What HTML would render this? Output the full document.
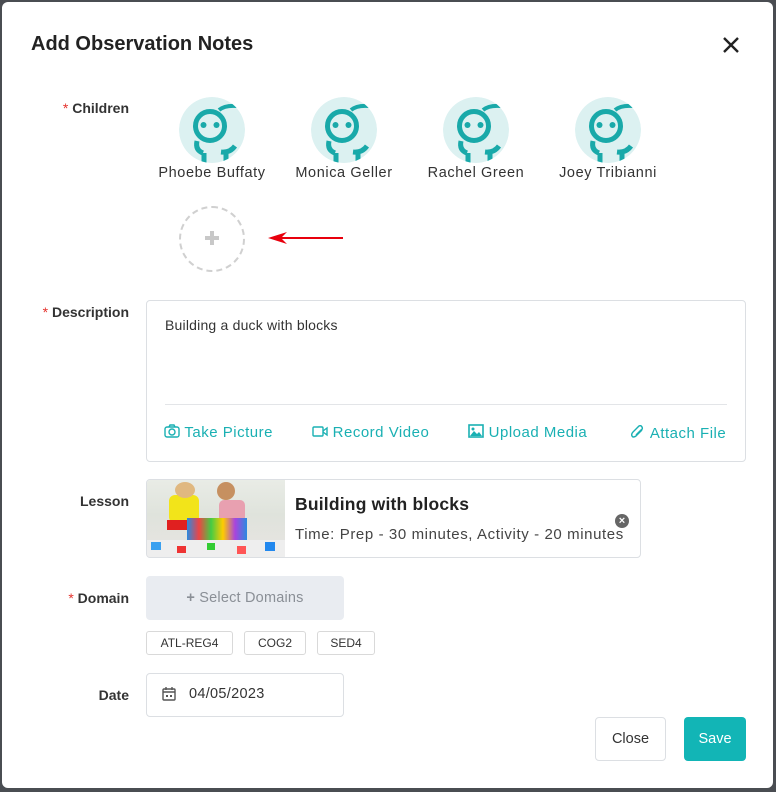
<!DOCTYPE html>
<html><head><style>
*{box-sizing:border-box;margin:0;padding:0}
body{width:776px;height:792px;background:#4a4d52;font-family:"Liberation Sans",sans-serif;position:relative;overflow:hidden}
.m{position:absolute;left:2px;top:2px;width:771px;height:786px;background:#fff;border-radius:6px}
.a{position:absolute}
.lbl{position:absolute;right:647px;font-size:14px;font-weight:bold;color:#333;text-align:right;white-space:nowrap}
.lbl b{color:#e5322d;font-weight:normal}
.nm{position:absolute;width:132px;text-align:center;font-size:14.5px;color:#333;letter-spacing:0.6px;white-space:nowrap}
.box{position:absolute;border:1px solid #dcdfe3;border-radius:4px;background:#fff}
.act{position:absolute;top:424px;font-size:15px;color:#1ab0b3;letter-spacing:0.5px;white-space:nowrap}
.tag{position:absolute;top:631px;height:24px;border:1px solid #d9d9d9;border-radius:3px;font-size:12px;color:#333;line-height:22px;text-align:center}
</style></head><body>
<div class="m"></div>
<div class="a" style="left:31px;top:33px;font-size:20px;font-weight:bold;color:#222">Add Observation Notes</div>
<svg class="a" style="left:722px;top:36px" width="18" height="18"><path d="M2 2L16 16M16 2L2 16" stroke="#222" stroke-width="2.4"/></svg>

<div class="lbl" style="top:100px"><b>* </b>Children</div>
<svg width="0" height="0" style="position:absolute"><defs><g id="f">
<circle cx="33" cy="33" r="33" fill="#dcf1f1"/>
<circle cx="31" cy="29" r="14.5" fill="none" stroke="#19a9a9" stroke-width="5"/>
<path d="M40 13 Q46 8 58 9" fill="none" stroke="#19a9a9" stroke-width="4"/>
<circle cx="24.5" cy="28" r="3" fill="#19a9a9"/><circle cx="37.5" cy="28" r="3" fill="#19a9a9"/>
<path d="M18 44 Q16 53 24 56 M25 56 V66 M42 55 Q51 56 56 49 M47 57 V64" fill="none" stroke="#19a9a9" stroke-width="5"/>
</g></defs></svg>
<svg class="a" style="left:179px;top:97px" width="66" height="66"><clipPath id="c"><circle cx="33" cy="33" r="33"/></clipPath><use href="#f" clip-path="url(#c)"/></svg>
<svg class="a" style="left:311px;top:97px" width="66" height="66"><use href="#f" clip-path="url(#c)"/></svg>
<svg class="a" style="left:443px;top:97px" width="66" height="66"><use href="#f" clip-path="url(#c)"/></svg>
<svg class="a" style="left:575px;top:97px" width="66" height="66"><use href="#f" clip-path="url(#c)"/></svg>
<div class="nm" style="left:146px;top:165px">Phoebe Buffaty</div>
<div class="nm" style="left:278px;top:165px">Monica Geller</div>
<div class="nm" style="left:410px;top:165px">Rachel Green</div>
<div class="nm" style="left:542px;top:165px">Joey Tribianni</div>
<div class="a" style="left:179px;top:206px;width:66px;height:66px;border:2px dashed #d0d0d0;border-radius:50%"></div>
<svg class="a" style="left:203px;top:229px" width="18" height="18"><path d="M9 2V16M2 9H16" stroke="#c8c8c8" stroke-width="4"/></svg>
<svg class="a" style="left:265px;top:230px" width="80" height="16"><path d="M78 8H14" stroke="#e8000d" stroke-width="2"/><path d="M3 8L22 2L16 8L22 14Z" fill="#e8000d"/></svg>

<div class="lbl" style="top:304px"><b>* </b>Description</div>
<div class="box" style="left:146px;top:300px;width:600px;height:162px"></div>
<div class="a" style="left:165px;top:317px;font-size:14px;color:#333;letter-spacing:0.2px">Building a duck with blocks</div>
<div class="a" style="left:165px;top:404px;width:562px;height:1px;background:#e3e5e8"></div>
<div class="act" style="left:164px"><svg width="16" height="14" style="vertical-align:-1px"><rect x="1" y="3" width="14" height="10" rx="2" fill="none" stroke="#1ab0b3" stroke-width="1.4"/><circle cx="8" cy="8" r="3" fill="none" stroke="#1ab0b3" stroke-width="1.4"/><path d="M5 3L6 1H10L11 3" fill="none" stroke="#1ab0b3" stroke-width="1.4"/></svg> Take Picture</div>
<div class="act" style="left:312px"><svg width="16" height="14" style="vertical-align:-1px"><rect x="1" y="3" width="10" height="9" rx="1" fill="none" stroke="#1ab0b3" stroke-width="1.4"/><path d="M11 7L15 4V11L11 8" fill="none" stroke="#1ab0b3" stroke-width="1.4"/></svg> Record Video</div>
<div class="act" style="left:468px"><svg width="16" height="14" style="vertical-align:-1px"><rect x="1" y="1" width="14" height="12" fill="none" stroke="#1ab0b3" stroke-width="1.6"/><path d="M2 12L6 7L9 10L11 8L14 12Z" fill="#1ab0b3"/><circle cx="5" cy="5" r="1.5" fill="#1ab0b3"/></svg> Upload Media</div>
<div class="act" style="left:630px;top:425px"><svg width="16" height="14" style="vertical-align:-1px"><path d="M12 5L6 11Q3 13 2 11Q1 9 3 7L9 1Q11 0 12 2Q13 4 11 5L6 10" fill="none" stroke="#1ab0b3" stroke-width="1.4"/></svg> Attach File</div>

<div class="lbl" style="top:493px">Lesson</div>
<div class="box" style="left:146px;top:479px;width:495px;height:79px;overflow:hidden">
<div class="a" style="left:0;top:0;width:138px;height:77px;background:linear-gradient(180deg,#e9ece6 0%,#dfe3dc 45%,#e8e4e2 100%);overflow:hidden">
<div class="a" style="left:22px;top:15px;width:30px;height:28px;background:#f2e41a;border-radius:6px"></div>
<div class="a" style="left:28px;top:2px;width:20px;height:16px;background:#e0b880;border-radius:50%"></div>
<div class="a" style="left:70px;top:2px;width:18px;height:18px;background:#c69060;border-radius:50%"></div>
<div class="a" style="left:72px;top:20px;width:26px;height:26px;background:#e8a0b0;border-radius:5px"></div>
<div class="a" style="left:20px;top:40px;width:20px;height:10px;background:#e02020"></div>
<div class="a" style="left:40px;top:38px;width:60px;height:22px;background:linear-gradient(90deg,#2a8ae0,#e44,#4c4,#fc0,#a4d,#2a8ae0)"></div>
<div class="a" style="left:0;top:60px;width:138px;height:17px;background:#eee"></div>
<div class="a" style="left:4px;top:62px;width:10px;height:8px;background:#3aa0f0"></div>
<div class="a" style="left:30px;top:66px;width:9px;height:7px;background:#e33"></div>
<div class="a" style="left:60px;top:63px;width:8px;height:7px;background:#3c3"></div>
<div class="a" style="left:90px;top:66px;width:9px;height:8px;background:#f55"></div>
<div class="a" style="left:118px;top:62px;width:10px;height:9px;background:#28e"></div>
</div>
<div class="a" style="left:148px;top:14px;font-size:17.5px;font-weight:bold;color:#222;letter-spacing:0.2px">Building with blocks</div>
<div class="a" style="left:148px;top:46px;font-size:15px;color:#444;letter-spacing:0.6px;white-space:nowrap">Time: Prep - 30 minutes, Activity - 20 minutes</div>
<div class="a" style="left:468px;top:34px;width:14px;height:14px;border-radius:50%;background:#666;color:#fff;font-size:11px;line-height:14px;text-align:center;font-weight:bold">×</div>
</div>

<div class="lbl" style="top:590px"><b>* </b>Domain</div>
<div class="a" style="left:146px;top:576px;width:198px;height:44px;background:#e9ecf1;border-radius:4px;font-size:14.5px;color:#8a8f96;line-height:44px;text-align:center;letter-spacing:0.2px"><b style="color:#8a8f96">+</b> Select Domains</div>
<div class="tag" style="left:146px;width:87px">ATL-REG4</div>
<div class="tag" style="left:244px;width:62px">COG2</div>
<div class="tag" style="left:317px;width:58px">SED4</div>

<div class="lbl" style="top:687px">Date</div>
<div class="box" style="left:146px;top:673px;width:198px;height:44px"></div>
<svg class="a" style="left:162px;top:686px" width="14" height="15"><rect x="1" y="3" width="12" height="11" rx="1" fill="none" stroke="#555" stroke-width="1.4"/><path d="M1 6H13M4 1V4M10 1V4" stroke="#555" stroke-width="1.4"/><rect x="4" y="9" width="2" height="2" fill="#555"/><rect x="8" y="9" width="2" height="2" fill="#555"/></svg>
<div class="a" style="left:189px;top:686px;font-size:14.5px;color:#333;letter-spacing:0.3px">04/05/2023</div>

<div class="a" style="left:595px;top:717px;width:71px;height:44px;border:1px solid #dcdfe3;border-radius:4px;font-size:14.5px;color:#333;line-height:42px;text-align:center">Close</div>
<div class="a" style="left:684px;top:717px;width:62px;height:44px;background:#12b5b6;border-radius:4px;font-size:14.5px;color:#fff;line-height:44px;text-align:center">Save</div>
</body></html>
